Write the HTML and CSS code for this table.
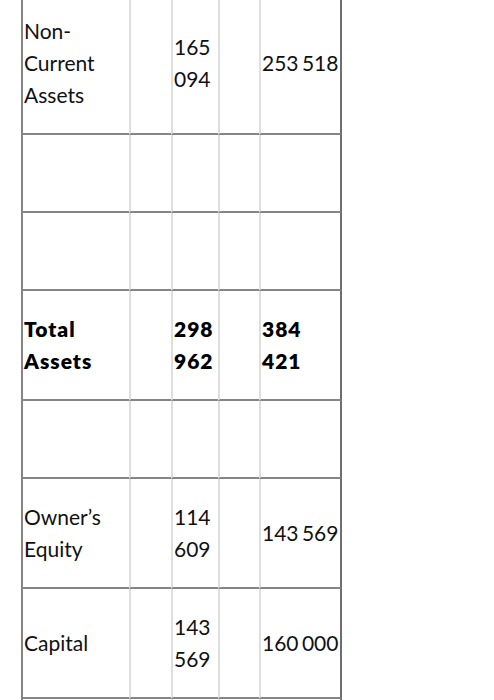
FILE: index.html
```html
<!DOCTYPE html>
<html lang="en">
<head>
<meta charset="utf-8">
<title>Balance sheet</title>
<link rel="stylesheet" href="styles.css">
</head>
<body>
<table class="sheet">
  <colgroup>
    <col class="c-label">
    <col class="c-gap1">
    <col class="c-y1">
    <col class="c-gap2">
    <col class="c-y2">
  </colgroup>
  <tbody>
    <tr class="r3">
      <td>Non-Current Assets</td>
      <td></td>
      <td>165 094</td>
      <td></td>
      <td class="whole">253 518</td>
    </tr>
    <tr class="r1"><td></td><td></td><td></td><td></td><td></td></tr>
    <tr class="r1"><td></td><td></td><td></td><td></td><td></td></tr>
    <tr class="total">
      <td>Total Assets</td>
      <td></td>
      <td>298 962</td>
      <td></td>
      <td>384 421</td>
    </tr>
    <tr class="r1"><td></td><td></td><td></td><td></td><td></td></tr>
    <tr>
      <td>Owner’s Equity</td>
      <td></td>
      <td>114 609</td>
      <td></td>
      <td class="whole">143 569</td>
    </tr>
    <tr>
      <td>Capital</td>
      <td></td>
      <td>143 569</td>
      <td></td>
      <td class="whole">160 000</td>
    </tr>
    <tr class="r1"><td></td><td></td><td></td><td></td><td></td></tr>
  </tbody>
</table>
</body>
</html>
```

FILE: styles.css
```css
html, body {
  margin: 0;
  padding: 0;
  background: #ffffff;
}

body {
  font-family: Lato, "Liberation Sans", sans-serif;
  font-size: 21px;
  line-height: 32px;
  color: #111111;
  overflow: hidden;
}

.sheet {
  margin: -7px 0 0 21px;
  border-collapse: separate;
  border-spacing: 0;
  table-layout: fixed;
  width: 321px;
}

.c-label { width: 108px; }
.c-gap1 { width: 42px; }
.c-y1 { width: 47px; }
.c-gap2 { width: 41px; }
.c-y2 { width: 83px; }

.sheet td {
  box-sizing: border-box;
  padding: 22px 0 22px 1px;
  vertical-align: middle;
  text-align: left;
  border-left: 2px solid #dedede;
  border-bottom: 2px solid #858585;
}

.sheet td:first-child {
  border-left-color: #858585;
}

.sheet td:last-child {
  border-right: 2px solid #6e6e6e;
}

.sheet td.whole {
  white-space: nowrap;
  word-spacing: -2px;
}

.sheet .r1 td {
  height: 78px;
}

.sheet .total td {
  font-weight: 800;
  letter-spacing: 1px;
  color: #000000;
}

.sheet .total td:last-child {
  padding-right: 12px;
}
```
